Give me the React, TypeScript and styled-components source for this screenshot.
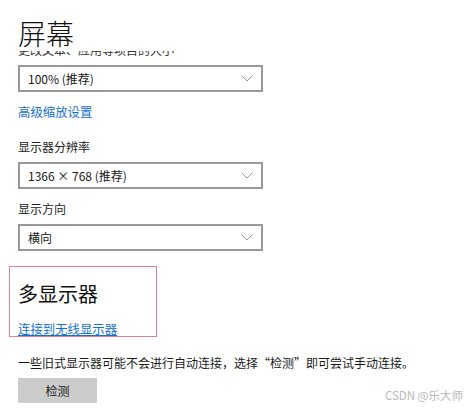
import React from 'react'
import styled, { createGlobalStyle } from 'styled-components'

const GlobalStyle = createGlobalStyle`
  html, body {
    margin: 0;
    padding: 0;
    background: #fff;
  }
  body {
    font-family: "Noto Sans CJK SC", "Noto Sans", sans-serif;
    color: #1a1a1a;
  }
`

const Page = styled.div`
  position: relative;
  width: 474px;
  height: 411px;
  overflow: hidden;
  padding-left: 18px;
  box-sizing: border-box;
`

const Title = styled.div`
  margin-top: 17px;
  font-size: 28px;
  line-height: 32px;
  font-weight: 300;
  color: #111;
`

// bottom slice of a line hidden under the title in the original capture
const ClippedLine = styled.div`
  margin-top: 2px;
  height: 5px;
  overflow: hidden;

  > span {
    display: block;
    margin-top: -9px;
    font-size: 12px;
    line-height: 16px;
    color: #333;
    white-space: nowrap;
  }
`

const Label = styled.div<{ $top: number }>`
  margin-top: ${({ $top }) => $top}px;
  font-size: 12px;
  line-height: 16px;
  color: #222;
`

const Select = styled.div<{ $top: number }>`
  margin-top: ${({ $top }) => $top}px;
  width: 245px;
  height: 27px;
  box-sizing: border-box;
  border: 2px solid #999;
  display: flex;
  align-items: center;
  justify-content: space-between;
  padding: 0 8px;
  font-size: 12px;
  color: #1a1a1a;
`

const Link = styled.a<{ $top: number; $underline?: boolean }>`
  display: block;
  margin-top: ${({ $top }) => $top}px;
  font-size: 12.4px;
  line-height: 14px;
  color: #1570d0;
  text-decoration: ${({ $underline }) => ($underline ? 'underline' : 'none')};
  text-underline-offset: 1px;
  cursor: pointer;
  width: fit-content;
`

const Highlight = styled.div`
  margin-top: 15px;
  margin-left: -9px;
  width: 148px;
  height: 71px;
  box-sizing: border-box;
  border: 1.5px solid #e0828c;
  padding: 14px 0 0 8px;
`

const SectionTitle = styled.div`
  font-size: 20px;
  line-height: 26px;
  color: #111;
`

const Paragraph = styled.div`
  margin-top: 18px;
  font-size: 12px;
  line-height: 16px;
  color: #1a1a1a;
  white-space: nowrap;
`

const Button = styled.button`
  margin-top: 7px;
  width: 79px;
  height: 25px;
  border: none;
  background: #cccccc;
  font-family: inherit;
  font-size: 12px;
  color: #1a1a1a;
  padding: 0;
`

const Watermark = styled.div`
  position: absolute;
  right: 11px;
  bottom: 8px;
  font-family: "Noto Sans CJK SC", sans-serif;
  font-size: 11.5px;
  line-height: 16px;
  color: #b8b8b8;
`

const Chevron = () => (
  <svg width="12" height="7" viewBox="0 0 12 7">
    <polyline points="0.5,0.5 6,6 11.5,0.5" fill="none" stroke="#9a9a9a" strokeWidth="1" />
  </svg>
)

export default function App() {
  return (
    <>
      <GlobalStyle />
      <Page>
        <Title>屏幕</Title>
        <ClippedLine>
          <span>更改文本、应用等项目的大小</span>
        </ClippedLine>
        <Select $top={9}>
          <span>100% (推荐)</span>
          <Chevron />
        </Select>
        <Link $top={13}>高级缩放设置</Link>
        <Label $top={20}>显示器分辨率</Label>
        <Select $top={7}>
          <span>1366 × 768 (推荐)</span>
          <Chevron />
        </Select>
        <Label $top={12}>显示方向</Label>
        <Select $top={7}>
          <span>横向</span>
          <Chevron />
        </Select>
        <Highlight>
          <SectionTitle>多显示器</SectionTitle>
          <Link $top={15} $underline>连接到无线显示器</Link>
        </Highlight>
        <Paragraph>一些旧式显示器可能不会进行自动连接，选择“检测”即可尝试手动连接。</Paragraph>
        <Button>检测</Button>
        <Watermark>CSDN @乐大师</Watermark>
      </Page>
    </>
  )
}
